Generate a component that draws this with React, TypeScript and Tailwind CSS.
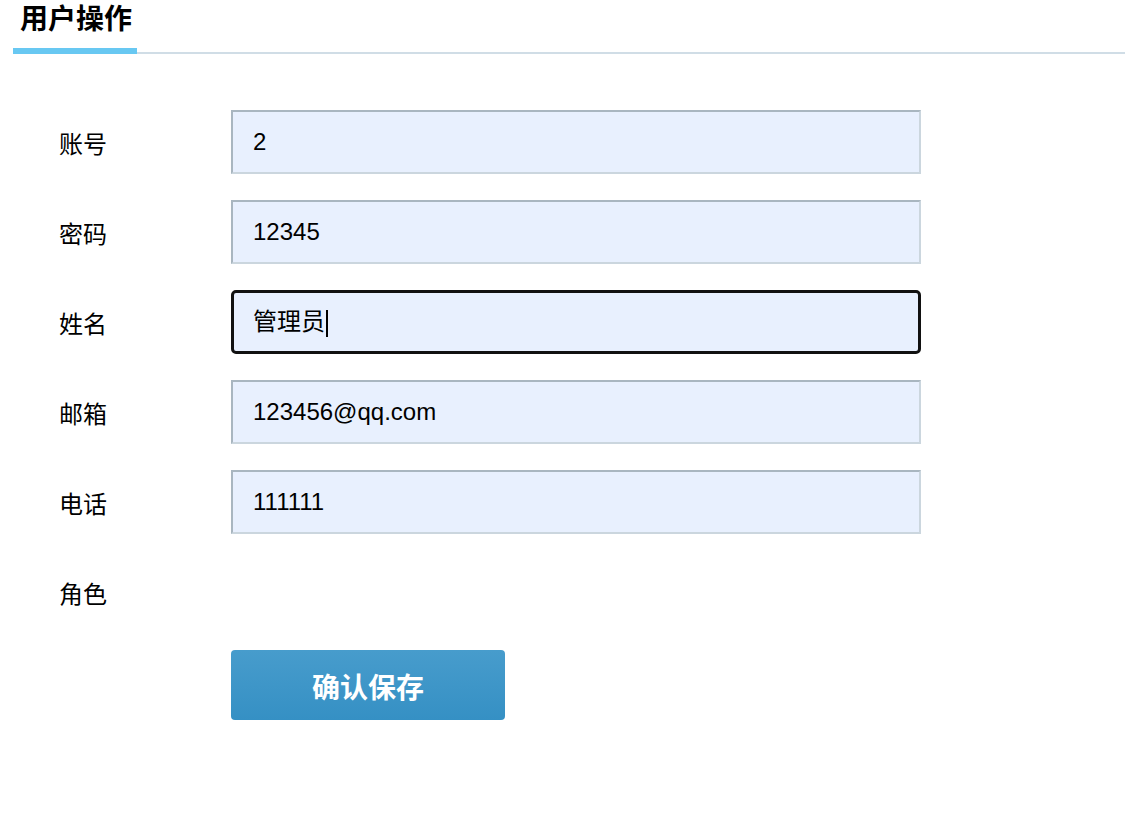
const FIELDS = [
  { label: "账号", value: "2" },
  { label: "密码", value: "12345" },
  { label: "姓名", value: "管理员", focused: true },
  { label: "邮箱", value: "123456@qq.com" },
  { label: "电话", value: "111111" },
];

export default function App() {
  return (
    <div
      className="min-h-[825px] bg-white text-black"
      style={{ fontFamily: '"Liberation Sans", "Noto Sans CJK SC", sans-serif' }}
    >
      {/* 标题栏 */}
      <div className="ml-[13px] flex border-b-2 border-[#d0dde6]">
        <div className="-mb-[2px] border-b-[6px] border-[#68c8f2] pl-[7px] pr-[5px] pb-[8px] text-[28px] leading-[40px] font-bold">
          用户操作
        </div>
      </div>

      {/* 表单 */}
      <div className="mt-[56px] flex flex-col gap-[26px] pl-[59px]">
        {FIELDS.map((f) => (
          <div key={f.label} className="flex h-[64px] items-center">
            <div className="w-[172px] pt-[6px] text-[24px]">{f.label}</div>
            {f.focused ? (
              <div className="flex h-[64px] w-[690px] items-center rounded-[5px] border-[3px] border-[#111] bg-[#e8f0fe] pl-[19px] text-[24px]">
                <span>{f.value}</span>
                <span className="mt-[2px] ml-[1px] h-[27px] w-[2px] bg-black" />
              </div>
            ) : (
              <div className="flex h-[64px] w-[690px] items-center border-2 border-t-[#a9b6c0] border-l-[#a9b6c0] border-r-[#cbd6de] border-b-[#cbd6de] bg-[#e8f0fe] pl-[20px] text-[24px]">
                {f.value}
              </div>
            )}
          </div>
        ))}

        <div className="flex h-[64px] items-center">
          <div className="w-[172px] pt-[6px] text-[24px]">角色</div>
        </div>

        <div className="flex">
          <div className="w-[172px]" />
          <button className="h-[70px] w-[274px] rounded-[4px] bg-linear-to-b from-[#479ccc] to-[#3590c4] pt-[7px] text-[28px] font-bold text-white">
            确认保存
          </button>
        </div>
      </div>
    </div>
  );
}
